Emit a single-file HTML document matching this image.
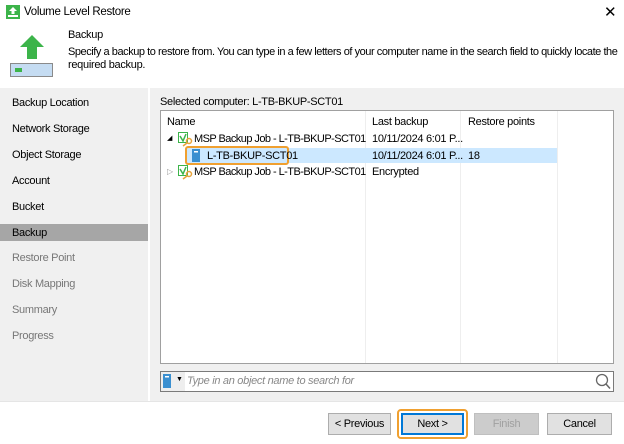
<!DOCTYPE html>
<html><head><meta charset="utf-8"><style>
*{margin:0;padding:0;box-sizing:border-box}
body{width:624px;height:444px;overflow:hidden;background:#fff;font-family:"Liberation Sans",sans-serif;font-size:11px;letter-spacing:-0.3px;color:#000;position:relative}
.a{position:absolute;white-space:nowrap}
.nav{position:absolute;left:0;top:88px;width:148px;height:313px;background:#f0f0f0}
.nav div{position:absolute;left:12px}
.main{position:absolute;left:150px;top:88px;width:474px;height:313px;background:#f0f0f0}
.tbl{position:absolute;left:160px;top:110px;width:454px;height:254px;background:#fff;border:1px solid #a0a0a0;overflow:hidden}
.btn{position:absolute;top:413px;height:22px;border:1px solid #adadad;background:#e1e1e1;text-align:center;line-height:20px}
.nm{letter-spacing:-0.55px}
</style></head><body>
<svg class="a" style="left:6px;top:5px" width="14" height="14"><rect width="14" height="14" fill="#3cb44a"/><path d="M7 2 L11 6 H8.5 V9 H5.5 V6 H3z" fill="#fff"/><rect x="2" y="10" width="10" height="2" fill="#fff"/></svg>
<div class="a" style="left:24px;top:6px;font-size:11.5px">Volume Level Restore</div>
<div class="a" style="left:604px;top:3px;font-size:15px">✕</div>
<svg class="a" style="left:10px;top:33px" width="44" height="45"><path d="M22 2 L34 14 H27 V26 H17 V14 H10z" fill="#3cb44a"/><rect x="0.5" y="30.5" width="42" height="13" fill="#c5dcf2" stroke="#8a8a8a"/><rect x="5" y="35" width="7" height="4" fill="#3cb44a"/></svg>
<div class="a" style="left:68px;top:29px">Backup</div>
<div class="a" style="left:68px;top:46px;letter-spacing:-0.45px">Specify a backup to restore from. You can type in a few letters of your computer name in the search field to quickly locate the</div>
<div class="a" style="left:68px;top:59px">required backup.</div>
<div class="nav">
<div style="top:9px">Backup Location</div>
<div style="top:35px">Network Storage</div>
<div style="top:61px">Object Storage</div>
<div style="top:87px">Account</div>
<div style="top:113px">Bucket</div>
<div style="top:136px;left:0;width:148px;height:17px;background:#a6a6a6"></div>
<div style="top:139px">Backup</div>
<div style="top:164px;color:#777">Restore Point</div>
<div style="top:190px;color:#777">Disk Mapping</div>
<div style="top:216px;color:#777">Summary</div>
<div style="top:242px;color:#777">Progress</div>
</div>
<div class="main"></div>
<div class="a" style="left:160px;top:96px">Selected computer: L-TB-BKUP-SCT01</div>
<div class="tbl">
<div class="a" style="left:204px;top:0;width:1px;height:252px;background:#eee"></div>
<div class="a" style="left:299px;top:0;width:1px;height:252px;background:#eee"></div>
<div class="a" style="left:396px;top:0;width:1px;height:252px;background:#eee"></div>
<div class="a" style="left:6px;top:5px">Name</div>
<div class="a" style="left:211px;top:5px">Last backup</div>
<div class="a" style="left:307px;top:5px">Restore points</div>
<div class="a" style="left:24px;top:37px;width:372px;height:15px;background:#cce8ff"></div>
<div class="a" style="left:6px;top:23px;font-size:7px">◢</div>
<div class="a" style="left:6px;top:56px;font-size:8px;color:#999">▷</div>
<svg class="a" style="left:17px;top:21px" width="15" height="15"><rect x="0.5" y="0.5" width="9" height="10" fill="#fff" stroke="#3cb44a"/><path d="M2 4 L5 9 L8 2" stroke="#3cb44a" fill="none" stroke-width="1.5"/><circle cx="11" cy="9" r="2.5" fill="none" stroke="#e8a33a" stroke-width="1.5"/><path d="M9 11 L5 14" stroke="#e8a33a" stroke-width="1.5"/></svg>
<svg class="a" style="left:17px;top:54px" width="15" height="15"><rect x="0.5" y="0.5" width="9" height="10" fill="#fff" stroke="#3cb44a"/><path d="M2 4 L5 9 L8 2" stroke="#3cb44a" fill="none" stroke-width="1.5"/><circle cx="11" cy="9" r="2.5" fill="none" stroke="#e8a33a" stroke-width="1.5"/><path d="M9 11 L5 14" stroke="#e8a33a" stroke-width="1.5"/></svg>
<div class="a nm" style="left:33px;top:22px">MSP Backup Job - L-TB-BKUP-SCT01</div>
<div class="a" style="left:211px;top:22px">10/11/2024 6:01 P...</div>
<div class="a" style="left:24px;top:35px;width:104px;height:19px;border:2px solid #f0a030;border-radius:3px"></div>
<svg class="a" style="left:31px;top:38px" width="8" height="13"><rect width="8" height="13" fill="#3a8fd0"/><rect x="2" y="2" width="4" height="1.5" fill="#fff"/></svg>
<div class="a" style="left:46px;top:39px">L-TB-BKUP-SCT01</div>
<div class="a" style="left:211px;top:39px">10/11/2024 6:01 P...</div>
<div class="a" style="left:307px;top:39px">18</div>
<div class="a nm" style="left:33px;top:55px">MSP Backup Job - L-TB-BKUP-SCT01</div>
<div class="a" style="left:211px;top:55px">Encrypted</div>
</div>
<div class="a" style="left:160px;top:371px;width:454px;height:21px;background:#fff;border:1px solid #7a7a7a"></div>
<div class="a" style="left:161px;top:372px;width:24px;height:19px;background:#eee"></div>
<svg class="a" style="left:163px;top:374px" width="8" height="14"><rect width="8" height="14" fill="#3a8fd0"/><rect x="2" y="2" width="4" height="1.5" fill="#fff"/></svg>
<div class="a" style="left:176px;top:376px;font-size:7px">▼</div>
<div class="a" style="left:187px;top:375px;font-style:italic;color:#888">Type in an object name to search for</div>
<svg class="a" style="left:594px;top:373px" width="18" height="17"><circle cx="8" cy="7" r="5.5" fill="none" stroke="#666" stroke-width="1.3"/><path d="M12 11 L16 15.5" stroke="#666" stroke-width="1.5"/></svg>
<div class="a" style="left:0;top:401px;width:624px;height:1px;background:#e5e5e5"></div>
<div class="btn" style="left:328px;width:63px">&lt; Previous</div>
<div class="a" style="left:397px;top:409px;width:71px;height:30px;border:2px solid #f0a030;border-radius:4px"></div>
<div class="btn" style="left:401px;width:63px;border:2px solid #0078d7;line-height:18px">Next &gt;</div>
<div class="btn" style="left:474px;width:65px;color:#a0a0a0;background:#ccc;border-color:#bfbfbf">Finish</div>
<div class="btn" style="left:547px;width:65px">Cancel</div>
</body></html>
